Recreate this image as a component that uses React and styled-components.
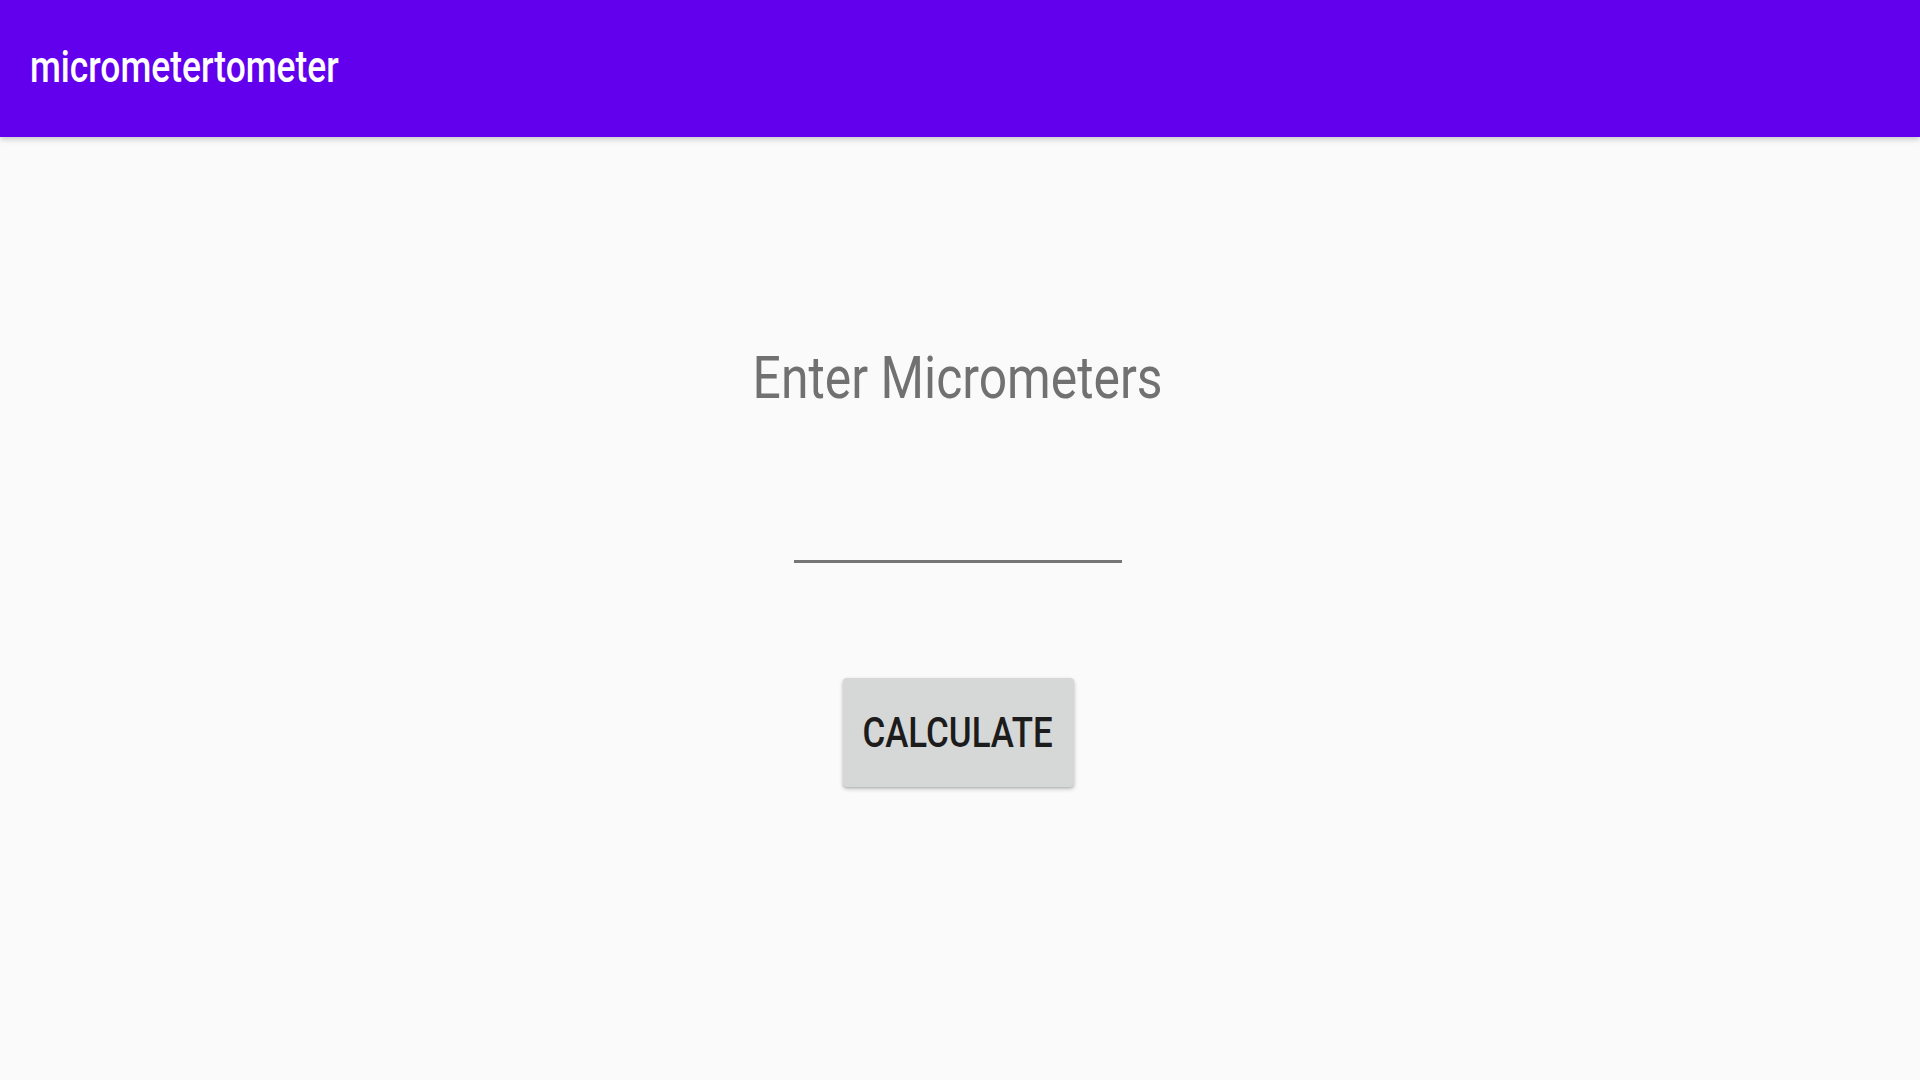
import React from 'react';
import styled, {createGlobalStyle} from 'styled-components';

// the source is a phone screen squeezed into 1920 wide, so text runs narrow
const GlobalStyle = createGlobalStyle`
  html, body {
    margin: 0;
    padding: 0;
    background: #fafafa;
    font-family: Roboto, "Noto Sans", "Liberation Sans", sans-serif;
  }
`;

const Screen = styled.div`
  width: 1920px;
  height: 1080px;
  display: flex;
  flex-direction: column;
  background: #fafafa;
  overflow: hidden;
`;

//App bar with the activity title
const AppBar = styled.header`
  height: 137px;
  flex: none;
  box-sizing: border-box;
  padding: 44px 0 0 30px;
  background: #6200ee;
  box-shadow: 0 2px 6px rgba(0, 0, 0, 0.22);
  position: relative;
  z-index: 1;
`;

const Title = styled.h1`
  margin: 0;
  font-size: 45px;
  line-height: 45px;
  font-weight: 500;
  color: #ffffff;
  white-space: nowrap;
  transform: scaleX(0.786);
  transform-origin: left center;
`;

//Centered column, sitting a few px left of the page middle as in the shot
const Content = styled.main`
  flex: 1;
  display: flex;
  flex-direction: column;
  align-items: center;
  padding: 211px 4px 0 0;
`;

const Squeezed = styled.span`
  display: inline-block;
  white-space: nowrap;
  transform: scaleX(${({scale}) => scale});
`;

const Prompt = styled.div`
  font-size: 59px;
  line-height: 59px;
  font-weight: 400;
  color: #717171;
`;

const Field = styled.input`
  width: 328px;
  height: 60px;
  margin-top: 93px;
  box-sizing: content-box;
  padding: 0;
  border: none;
  border-bottom: 3px solid #767676;
  background: transparent;
  outline: none;
  font-family: inherit;
  font-size: 40px;
  text-align: center;
`;

const Button = styled.button`
  width: 231px;
  height: 109px;
  margin-top: 115px;
  display: flex;
  align-items: center;
  justify-content: center;
  padding: 0;
  border: none;
  border-radius: 4px;
  background: #d6d7d7;
  box-shadow: 0 2px 4px rgba(0, 0, 0, 0.22), 0 1px 2px rgba(0, 0, 0, 0.12);
  font-family: inherit;
  font-size: 42px;
  line-height: 42px;
  font-weight: 500;
  color: #1c1c1c;
  cursor: pointer;
`;

const App = () => (
  <>
    <GlobalStyle />
    <Screen>
      <AppBar>
        <Title>micrometertometer</Title>
      </AppBar>
      <Content>
        <Prompt>
          <Squeezed scale={0.845}>Enter Micrometers</Squeezed>
        </Prompt>
        <Field type="number" aria-label="Micrometers" />
        <Button>
          <Squeezed scale={0.83}>CALCULATE</Squeezed>
        </Button>
      </Content>
    </Screen>
  </>
);

export default App;
